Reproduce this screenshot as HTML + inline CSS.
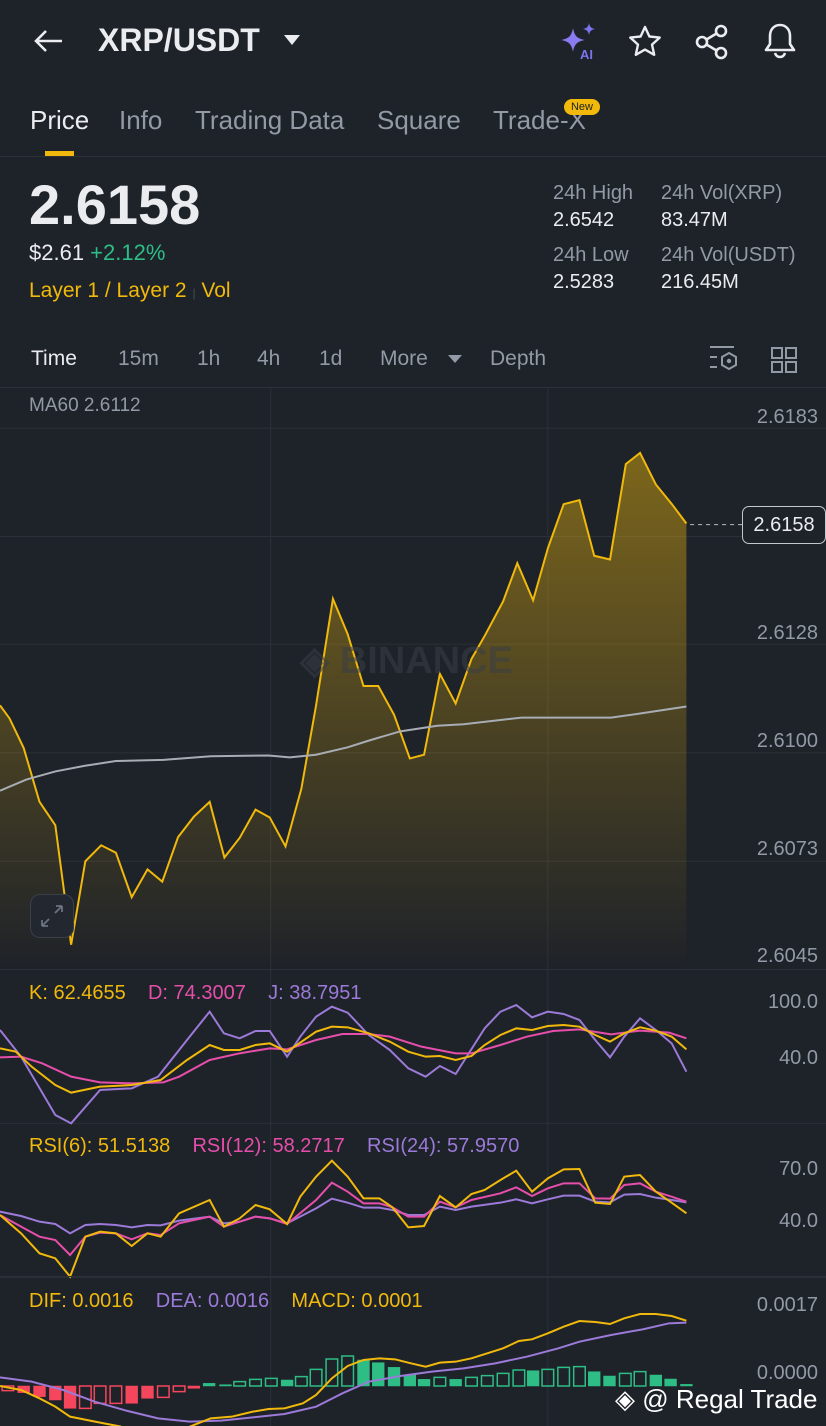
<!DOCTYPE html>
<html><head><meta charset="utf-8"><style>
*{margin:0;padding:0;box-sizing:border-box}
body{width:826px;height:1426px;background:#1e2229;font-family:"Liberation Sans",sans-serif;color:#eaecef;position:relative;overflow:hidden}
.a{position:absolute;white-space:nowrap}
.g{color:#929aa5}
.ax{right:8px;font-size:20px;color:#929aa5}
</style></head><body>
<!-- header -->
<svg class="a" style="left:30px;top:26px" width="36" height="30" viewBox="0 0 36 30"><path d="M32 15H6M16 5L6 15l10 10" fill="none" stroke="#eaecef" stroke-width="2.6"/></svg>
<div class="a" style="left:98px;top:22px;font-size:32px;font-weight:bold">XRP/USDT</div>
<svg class="a" style="left:283px;top:34px" width="18" height="12"><path d="M1 1h16L9 11z" fill="#eaecef"/></svg>
<svg class="a" style="left:558px;top:22px" width="42" height="40" viewBox="0 0 42 40"><path d="M15 6c1.5 8 4 10.5 12 12-8 1.5-10.5 4-12 12-1.5-8-4-10.5-12-12 8-1.5 10.5-4 12-12z" fill="#8a7cf0"/><path d="M31 1c.8 4 2 5 6 6-4 1-5.2 2-6 6-.8-4-2-5-6-6 4-1 5.2-2 6-6z" fill="#7b74ee"/><text x="22" y="37" font-size="13" font-weight="bold" fill="#7b74ee" font-family="Liberation Sans">AI</text></svg>
<svg class="a" style="left:627px;top:24px" width="36" height="36" viewBox="0 0 36 36"><path d="M18 3l4.4 9.5 10.3 1.1-7.7 7 2.2 10.2L18 25.6l-9.2 5.2 2.2-10.2-7.7-7 10.3-1.1z" fill="none" stroke="#eaecef" stroke-width="2.4" stroke-linejoin="round"/></svg>
<svg class="a" style="left:694px;top:24px" width="36" height="36" viewBox="0 0 36 36"><circle cx="8" cy="18" r="5" fill="none" stroke="#eaecef" stroke-width="2.6"/><circle cx="27" cy="7" r="5" fill="none" stroke="#eaecef" stroke-width="2.6"/><circle cx="27" cy="29" r="5" fill="none" stroke="#eaecef" stroke-width="2.6"/><path d="M12.5 15.5l10-6M12.5 20.5l10 6" stroke="#eaecef" stroke-width="2.6"/></svg>
<svg class="a" style="left:762px;top:22px" width="36" height="38" viewBox="0 0 36 38"><path d="M18 3c-6 0-10 4.5-10 11v8l-4 6h28l-4-6v-8c0-6.5-4-11-10-11z" fill="none" stroke="#eaecef" stroke-width="2.6" stroke-linejoin="round"/><path d="M13 31c1 3 3 4 5 4s4-1 5-4" fill="none" stroke="#eaecef" stroke-width="2.6"/></svg>
<!-- tabs -->
<div class="a" style="left:30px;top:105px;font-size:26px;color:#eaecef">Price</div>
<div class="a g" style="left:119px;top:105px;font-size:26px">Info</div>
<div class="a g" style="left:195px;top:105px;font-size:26px">Trading Data</div>
<div class="a g" style="left:377px;top:105px;font-size:26px">Square</div>
<div class="a g" style="left:493px;top:105px;font-size:26px">Trade-X</div>
<div class="a" style="left:564px;top:99px;width:36px;height:16px;background:#f0b90b;border-radius:8px;color:#1e2229;font-size:11px;text-align:center;line-height:16px">New</div>
<div class="a" style="left:45px;top:151px;width:29px;height:5px;background:#f0b90b"></div>
<div class="a" style="left:0;top:156px;width:826px;height:1px;background:#2b3139"></div>
<!-- price block -->
<div class="a" style="left:29px;top:172px;font-size:56px;font-weight:bold">2.6158</div>
<div class="a" style="left:29px;top:240px;font-size:22px">$2.61 <span style="color:#2ebd85">+2.12%</span></div>
<div class="a" style="left:29px;top:279px;font-size:21px;color:#f0b90b">Layer 1 / Layer 2 <span style="color:#474d57;font-size:12px">|</span> Vol</div>
<div class="a g" style="left:553px;top:182px;font-size:20px">24h High</div>
<div class="a" style="left:553px;top:209px;font-size:20px">2.6542</div>
<div class="a g" style="left:553px;top:244px;font-size:20px">24h Low</div>
<div class="a" style="left:553px;top:271px;font-size:20px">2.5283</div>
<div class="a g" style="left:661px;top:182px;font-size:20px">24h Vol(XRP)</div>
<div class="a" style="left:661px;top:209px;font-size:20px">83.47M</div>
<div class="a g" style="left:661px;top:244px;font-size:20px">24h Vol(USDT)</div>
<div class="a" style="left:661px;top:271px;font-size:20px">216.45M</div>
<!-- intervals -->
<div class="a" style="left:31px;top:347px;font-size:21px">Time</div>
<div class="a g" style="left:118px;top:347px;font-size:21px">15m</div>
<div class="a g" style="left:197px;top:347px;font-size:21px">1h</div>
<div class="a g" style="left:257px;top:347px;font-size:21px">4h</div>
<div class="a g" style="left:319px;top:347px;font-size:21px">1d</div>
<div class="a g" style="left:380px;top:347px;font-size:21px">More</div>
<svg class="a" style="left:447px;top:354px" width="16" height="10"><path d="M1 1h14L8 9z" fill="#929aa5"/></svg>
<div class="a g" style="left:490px;top:347px;font-size:21px">Depth</div>
<svg class="a" style="left:708px;top:345px" width="32" height="30" viewBox="0 0 32 30"><path d="M2 2h24M2 12h7M2 22h7" stroke="#929aa5" stroke-width="2"/><path d="M21 8l7 4v8l-7 4-7-4v-8z" fill="none" stroke="#929aa5" stroke-width="2"/><circle cx="21" cy="16" r="2.2" fill="#929aa5"/></svg>
<svg class="a" style="left:770px;top:346px" width="28" height="28" viewBox="0 0 28 28"><g fill="none" stroke="#929aa5" stroke-width="2"><rect x="2" y="2" width="10" height="10"/><rect x="16" y="2" width="10" height="10"/><rect x="2" y="16" width="10" height="10"/><rect x="16" y="16" width="10" height="10"/></g></svg>
<div class="a" style="left:0;top:387px;width:826px;height:1px;background:#2b3139"></div>
<!-- main chart -->
<svg class="a" style="left:0;top:388px" width="826" height="582" viewBox="0 0 1568 1568" preserveAspectRatio="none">
<defs><linearGradient id="fg" x1="0" y1="0" x2="0" y2="1"><stop offset="0" stop-color="#f0b90b" stop-opacity=".45"/><stop offset="1" stop-color="#f0b90b" stop-opacity="0"/></linearGradient></defs>
<path d="M0 108H1568M0 400H1568M0 690H1568M0 983H1568M0 1275H1568M514 0V1568M1040 0V1568" stroke="#2b3139" stroke-width="1" vector-effect="non-scaling-stroke"/>
<path d="M0 855L18 890 45 970 75 1115 105 1178 135 1500 162 1275 192 1232 220 1252 250 1372 280 1297 308 1330 338 1210 368 1155 398 1115 426 1265 455 1212 485 1136 512 1157 542 1235 572 1080 600 855 632 568 660 663 690 803 718 803 748 880 778 998 805 988 835 770 865 850 895 730 920 668 955 575 982 472 1012 572 1040 432 1070 313 1100 302 1128 452 1158 462 1188 205 1215 175 1245 260 1275 312 1303 365V1568H0Z" fill="url(#fg)"/>
<path d="M0 855L18 890 45 970 75 1115 105 1178 135 1500 162 1275 192 1232 220 1252 250 1372 280 1297 308 1330 338 1210 368 1155 398 1115 426 1265 455 1212 485 1136 512 1157 542 1235 572 1080 600 855 632 568 660 663 690 803 718 803 748 880 778 998 805 988 835 770 865 850 895 730 920 668 955 575 982 472 1012 572 1040 432 1070 313 1100 302 1128 452 1158 462 1188 205 1215 175 1245 260 1275 312 1303 365" fill="none" stroke="#f0b90b" stroke-width="2" vector-effect="non-scaling-stroke"/>
<path d="M0 1085L50 1055 105 1033 160 1018 220 1005 310 1002 400 992 510 990 550 995 600 988 660 968 700 950 760 925 830 910 880 906 990 888 1160 888 1220 876 1303 858" fill="none" stroke="#a8adb5" stroke-width="2" vector-effect="non-scaling-stroke"/>
<path d="M1310 368H1410" stroke="#b7bdc6" stroke-dasharray="4 4" stroke-width="1" vector-effect="non-scaling-stroke"/>
</svg>
<div class="a" style="left:300px;top:638px;font-size:38px;font-weight:bold;color:#3a3f47;opacity:.55">◈ BINANCE</div>
<div class="a g" style="left:29px;top:395px;font-size:19px">MA60 2.6112</div>
<div class="a ax" style="top:406px">2.6183</div>
<div class="a ax" style="top:622px">2.6128</div>
<div class="a ax" style="top:730px">2.6100</div>
<div class="a ax" style="top:838px">2.6073</div>
<div class="a ax" style="top:945px">2.6045</div>
<div class="a" style="left:742px;top:506px;width:84px;height:38px;border:1px solid #c4c8ce;border-radius:7px;background:#1e2229;font-size:20px;text-align:center;line-height:36px">2.6158</div>
<div class="a" style="left:30px;top:894px;width:44px;height:44px;border:1.5px solid #3a404a;border-radius:10px;background:#232830"></div>
<svg class="a" style="left:38px;top:902px" width="28" height="28" viewBox="0 0 28 28"><path d="M4 24L11 17M4 24v-6M4 24h6M24 4l-7 7M24 4v6M24 4h-6" stroke="#6b7280" stroke-width="1.8" fill="none"/></svg>
<div class="a" style="left:0;top:969px;width:826px;height:1px;background:#2b3139"></div>
<!-- KDJ + RSI -->
<svg class="a" style="left:0;top:970px" width="826" height="310" viewBox="0 0 1568 930" preserveAspectRatio="none">
<g fill="none" stroke-width="2">
<path d="M514 0V930M1040 0V930M0 460H1568M0 922H1568" stroke="#2b3139" stroke-width="1" vector-effect="non-scaling-stroke"/>
<path d="M0 180L40 260 105 435 135 460 190 360 250 355 300 320 355 210 398 125 425 190 455 205 485 183 512 183 545 260 570 200 600 140 630 110 660 128 700 195 740 240 775 295 808 320 835 288 865 312 920 175 950 125 980 105 1010 142 1040 125 1070 132 1100 150 1130 210 1158 262 1185 200 1215 145 1245 180 1275 220 1303 305" stroke="#9b7ad8" vector-effect="non-scaling-stroke"/>
<path d="M0 262L40 260 80 280 135 320 190 337 250 340 310 337 340 320 398 270 455 250 512 235 545 238 600 210 650 192 700 192 740 200 800 230 865 250 895 250 950 225 1000 200 1050 183 1100 178 1160 193 1215 182 1270 188 1303 205" stroke="#e54faa" vector-effect="non-scaling-stroke"/>
<path d="M0 235L30 245 60 290 105 345 135 368 190 350 250 345 305 330 355 270 398 225 425 240 455 240 485 225 512 220 545 245 600 185 630 170 660 172 700 190 740 215 775 245 808 260 835 258 865 270 895 258 920 225 950 195 980 175 1010 180 1040 168 1070 165 1100 170 1130 195 1158 215 1185 190 1215 172 1245 182 1275 200 1303 238" stroke="#f0b90b" vector-effect="non-scaling-stroke"/>
<path d="M0 725L40 738 75 755 105 762 133 790 162 765 190 762 220 765 250 772 280 765 305 766 340 752 398 740 425 760 455 755 485 740 512 745 545 760 600 715 630 686 660 698 690 713 720 713 745 720 775 735 805 735 835 710 865 720 895 710 950 698 980 688 1010 700 1040 688 1070 677 1100 677 1130 695 1158 697 1185 674 1215 672 1245 683 1275 690 1303 697" stroke="#9b7ad8" vector-effect="non-scaling-stroke"/>
<path d="M0 735L40 770 75 800 105 810 133 855 162 800 190 788 220 790 250 808 280 790 305 795 340 760 398 740 425 770 455 755 485 740 512 745 545 762 600 690 630 638 660 665 690 700 720 700 745 712 775 740 805 740 835 695 865 712 895 690 950 670 980 652 1010 678 1040 655 1070 640 1100 640 1130 685 1158 686 1185 645 1215 640 1245 665 1275 680 1303 695" stroke="#e54faa" vector-effect="non-scaling-stroke"/>
<path d="M0 735L40 790 75 850 105 865 133 920 162 800 190 785 220 790 250 828 280 790 305 800 340 730 398 690 425 770 455 745 485 705 512 718 545 762 570 680 600 620 630 572 660 620 690 685 720 685 745 712 775 772 805 768 835 678 865 712 895 672 920 660 950 630 980 602 1010 665 1040 625 1070 598 1100 597 1130 698 1158 702 1185 620 1215 615 1245 665 1275 698 1303 730" stroke="#f0b90b" vector-effect="non-scaling-stroke"/>
</g></svg>
<div class="a" style="left:29px;top:982px;font-size:20px"><span style="color:#f0b90b">K: 62.4655</span>&nbsp;&nbsp;&nbsp; <span style="color:#e54faa">D: 74.3007</span>&nbsp;&nbsp;&nbsp; <span style="color:#9b7ad8">J: 38.7951</span></div>
<div class="a ax" style="top:991px">100.0</div>
<div class="a ax" style="top:1047px">40.0</div>
<div class="a" style="left:29px;top:1135px;font-size:20px"><span style="color:#f0b90b">RSI(6): 51.5138</span>&nbsp;&nbsp;&nbsp; <span style="color:#e54faa">RSI(12): 58.2717</span>&nbsp;&nbsp;&nbsp; <span style="color:#9b7ad8">RSI(24): 57.9570</span></div>
<div class="a ax" style="top:1158px">70.0</div>
<div class="a ax" style="top:1210px">40.0</div>
<!-- MACD -->
<svg class="a" style="left:0;top:1280px" width="826" height="146" viewBox="0 0 1568 438" preserveAspectRatio="none">
<path d="M514 0V438M1040 0V438" stroke="#2b3139" stroke-width="1" vector-effect="non-scaling-stroke"/>
<g fill="#f6465d" stroke="#f6465d" stroke-width="1.5">
<rect x="4" y="318" width="22" height="14" fill="none" vector-effect="non-scaling-stroke"/><rect x="34" y="318" width="22" height="20"/><rect x="64" y="318" width="22" height="32"/><rect x="94" y="318" width="22" height="42"/><rect x="122" y="318" width="22" height="67"/><rect x="151" y="318" width="22" height="67" fill="none" vector-effect="non-scaling-stroke"/><rect x="179" y="318" width="22" height="52" fill="none" vector-effect="non-scaling-stroke"/><rect x="209" y="318" width="22" height="52" fill="none" vector-effect="non-scaling-stroke"/><rect x="239" y="318" width="22" height="52"/><rect x="269" y="318" width="22" height="37"/><rect x="299" y="318" width="22" height="34" fill="none" vector-effect="non-scaling-stroke"/><rect x="329" y="318" width="22" height="17" fill="none" vector-effect="non-scaling-stroke"/><rect x="357" y="318" width="22" height="7"/></g>
<g fill="#2ebd85" stroke="#2ebd85" stroke-width="1.5">
<rect x="386" y="310" width="22" height="8"/><rect x="417" y="314" width="22" height="4"/><rect x="444" y="305" width="22" height="13" fill="none" vector-effect="non-scaling-stroke"/><rect x="474" y="298" width="22" height="20" fill="none" vector-effect="non-scaling-stroke"/><rect x="504" y="295" width="22" height="23" fill="none" vector-effect="non-scaling-stroke"/><rect x="534" y="300" width="22" height="18"/><rect x="561" y="290" width="22" height="28" fill="none" vector-effect="non-scaling-stroke"/><rect x="589" y="268" width="22" height="50" fill="none" vector-effect="non-scaling-stroke"/><rect x="619" y="237" width="22" height="81" fill="none" vector-effect="non-scaling-stroke"/><rect x="649" y="228" width="22" height="90" fill="none" vector-effect="non-scaling-stroke"/><rect x="679" y="240" width="22" height="78"/><rect x="707" y="248" width="22" height="70"/><rect x="737" y="262" width="22" height="56"/><rect x="767" y="285" width="22" height="33"/><rect x="794" y="298" width="22" height="20"/><rect x="824" y="292" width="22" height="26" fill="none" vector-effect="non-scaling-stroke"/><rect x="854" y="298" width="22" height="20"/><rect x="884" y="292" width="22" height="26" fill="none" vector-effect="non-scaling-stroke"/><rect x="914" y="287" width="22" height="31" fill="none" vector-effect="non-scaling-stroke"/><rect x="944" y="280" width="22" height="38" fill="none" vector-effect="non-scaling-stroke"/><rect x="974" y="270" width="22" height="48" fill="none" vector-effect="non-scaling-stroke"/><rect x="1001" y="272" width="22" height="46"/><rect x="1029" y="268" width="22" height="50" fill="none" vector-effect="non-scaling-stroke"/><rect x="1059" y="262" width="22" height="56" fill="none" vector-effect="non-scaling-stroke"/><rect x="1089" y="260" width="22" height="58" fill="none" vector-effect="non-scaling-stroke"/><rect x="1117" y="275" width="22" height="43"/><rect x="1146" y="288" width="22" height="30"/><rect x="1176" y="280" width="22" height="38" fill="none" vector-effect="non-scaling-stroke"/><rect x="1204" y="275" width="22" height="43" fill="none" vector-effect="non-scaling-stroke"/><rect x="1234" y="285" width="22" height="33"/><rect x="1262" y="297" width="22" height="21"/><rect x="1292" y="313" width="22" height="5"/></g>
<path d="M0 292L60 305 120 330 180 365 240 392 300 415 360 425 420 422 480 412 540 402 600 380 650 340 700 305 760 288 820 275 880 265 940 250 1000 230 1060 205 1100 185 1160 165 1220 148 1270 130 1303 128" fill="none" stroke="#9b7ad8" stroke-width="2" vector-effect="non-scaling-stroke"/>
<path d="M0 318L40 330 75 355 105 380 133 410 190 428 230 440M360 440L400 415 440 410 480 395 510 387 540 385 575 370 600 345 630 295 660 258 690 240 720 235 750 238 780 250 808 260 835 248 865 245 895 235 925 220 955 205 985 183 1010 178 1040 160 1070 140 1100 123 1130 126 1158 132 1185 115 1215 102 1245 102 1275 108 1303 122" fill="none" stroke="#f0b90b" stroke-width="2" vector-effect="non-scaling-stroke"/>
</svg>
<div class="a" style="left:0;top:1276px;width:826px;height:1px;background:#2b3139"></div>
<div class="a" style="left:29px;top:1290px;font-size:20px"><span style="color:#f0b90b">DIF: 0.0016</span>&nbsp;&nbsp;&nbsp; <span style="color:#9b7ad8">DEA: 0.0016</span>&nbsp;&nbsp;&nbsp; <span style="color:#f0b90b">MACD: 0.0001</span></div>
<div class="a ax" style="top:1294px">0.0017</div>
<div class="a ax" style="top:1362px">0.0000</div>
<div class="a" style="left:615px;top:1384px;font-size:26px;color:#fff">◈ @ Regal Trade</div>
</body></html>
